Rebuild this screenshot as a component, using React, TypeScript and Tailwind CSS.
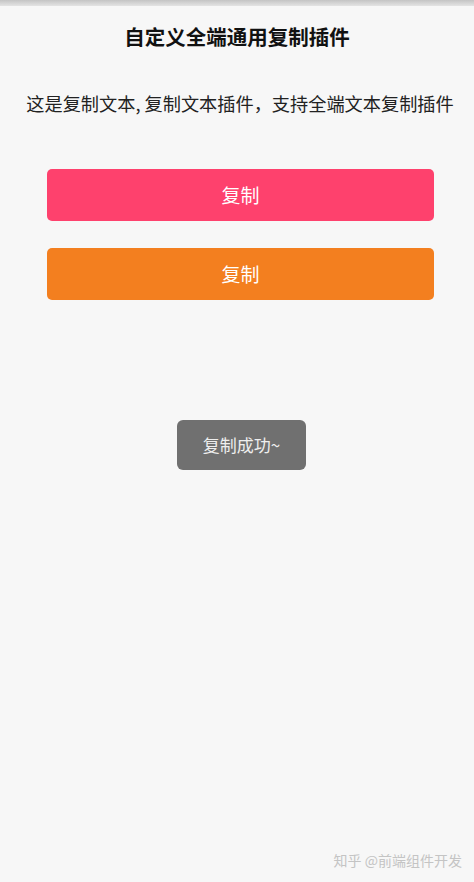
import React from "react";

const sans = { fontFamily: '"Noto Sans CJK SC", "Noto Sans", sans-serif' };

export default function App() {
  return (
    <div className="relative h-[882px] w-full overflow-hidden bg-[#f7f7f7]" style={sans}>
      <div className="h-[6px] w-full bg-gradient-to-b from-[#c4c4c4] to-[#e4e4e4]" />
      <h1 className="mt-[16px] text-center text-[20.5px] font-bold leading-[28px] text-[#111]">
        自定义全端通用复制插件
      </h1>
      <p className="mt-[39px] pl-[6px] text-center text-[18.2px] leading-[28px] text-[#222]">
        这是复制文本, 复制文本插件，支持全端文本复制插件
      </p>
      <div className="mt-[52px] flex flex-col gap-[27px] pl-[47px] pr-[40px]">
        <button className="h-[52px] w-full rounded-[5px] bg-[#fe416d] text-[19px] text-white">
          复制
        </button>
        <button className="h-[52px] w-full rounded-[5px] bg-[#f37f1f] text-[19px] text-white">
          复制
        </button>
      </div>
      <div className="absolute left-[177px] top-[420px] flex h-[50px] w-[129px] items-center justify-center rounded-[6px] bg-[#707070] text-[17px] text-[#eeeeee]">
        复制成功~
      </div>
      <div className="absolute right-[12px] top-[850px] text-[14px] text-[#c4c4c4]">
        知乎 @前端组件开发
      </div>
    </div>
  );
}
